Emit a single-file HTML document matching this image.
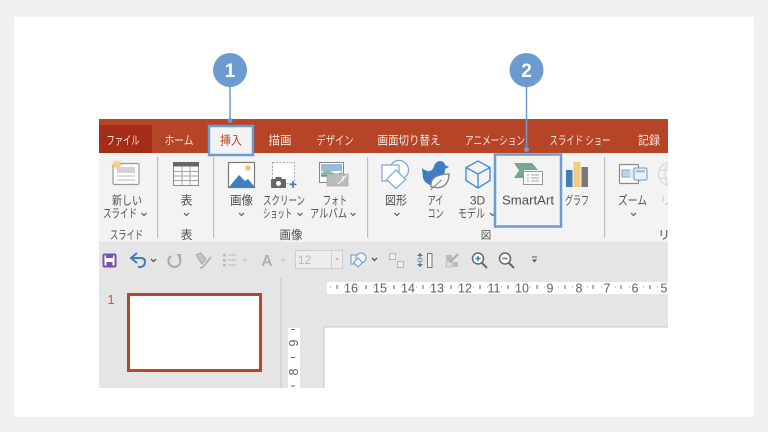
<!DOCTYPE html>
<html lang="ja"><head><meta charset="utf-8"><style>
html,body{margin:0;padding:0;width:768px;height:432px;overflow:hidden;background:#f0f0f0}
svg{display:block}
text{font-family:"Liberation Sans","Noto Sans CJK JP",sans-serif;font-size:12px;fill:#505050;text-anchor:middle}
.t{fill:#f8e8e3}
.r{font-size:12.5px;fill:#606060}
</style></head><body>
<svg width="768" height="432" viewBox="0 0 768 432" xmlns="http://www.w3.org/2000/svg">
<rect width="768" height="432" fill="#f0f0f0"/>
<rect x="14" y="17" width="740" height="400" fill="#fff"/>
<g style="filter:blur(.35px)">
<rect x="99" y="119" width="569" height="34" fill="#b64427"/>
<rect x="99" y="125" width="53" height="28" fill="#a52c17"/>
<rect x="99" y="153" width="569" height="89" fill="#f3f3f3"/>
<rect x="99" y="242" width="569" height="146" fill="#e5e5e5"/>
<!-- tabs -->
<text class="t" x="123" y="144.500" textLength="33" lengthAdjust="spacingAndGlyphs">ファイル</text>
<text class="t" x="179" y="144.500" textLength="29" lengthAdjust="spacingAndGlyphs">ホーム</text>
<rect x="209" y="126" width="44" height="29" fill="#f3f3f3" stroke="#6c9bd0" stroke-width="2.500"/>
<text x="231" y="144.500" style="fill:#b64427" textLength="22" lengthAdjust="spacingAndGlyphs">挿入</text>
<text class="t" x="280" y="144.500" textLength="23" lengthAdjust="spacingAndGlyphs">描画</text>
<text class="t" x="335" y="144.500" textLength="37" lengthAdjust="spacingAndGlyphs">デザイン</text>
<text class="t" x="409" y="144.500" textLength="63" lengthAdjust="spacingAndGlyphs">画面切り替え</text>
<text class="t" x="495" y="144.500" textLength="60" lengthAdjust="spacingAndGlyphs">アニメーション</text>
<text class="t" x="580" y="144.500" textLength="61" lengthAdjust="spacingAndGlyphs">スライド ショー</text>
<text class="t" x="649" y="144.500" textLength="22" lengthAdjust="spacingAndGlyphs">記録</text>
<!-- separators -->
<g fill="#bdbdbd"><rect x="157" y="157" width="1.200" height="81"/><rect x="213" y="157" width="1.200" height="81"/><rect x="367" y="157" width="1.200" height="81"/><rect x="604" y="157" width="1.200" height="81"/></g>
<!-- new slide icon -->
<rect x="113" y="163.500" width="26" height="21" rx="1.500" fill="#fbfbfb" stroke="#9a9a9a" stroke-width="1.200"/>
<rect x="117" y="167" width="18" height="6" fill="#d2d2d2"/>
<path d="M117 176h18M117 180h18" stroke="#bbb"/>
<circle cx="117" cy="164.500" r="3.500" fill="#f6cf8e"/>
<path d="M117 159v11M111.500 164.500h11M113 160.500l8 8M121 160.500l-8 8" stroke="#f6cf8e" stroke-width="1.100"/>
<!-- table icon -->
<rect x="173.500" y="162.500" width="25" height="23" fill="#fbfbfb" stroke="#8f8f8f"/>
<rect x="173" y="162" width="26" height="4.500" fill="#666"/>
<path d="M174 171.500h24M174 176h24M174 180.500h24M182 166v19M190 166v19" stroke="#a5a5a5" fill="none"/>
<!-- picture icon -->
<rect x="228.500" y="162.500" width="26" height="25" fill="#fff" stroke="#777" stroke-width="1.200"/>
<circle cx="248" cy="168" r="2.700" fill="#f3bf6a"/>
<path d="M229 187l10-12 6 6 3-2 6 7v1z" fill="#3f7fc0"/>
<!-- screenshot icon -->
<rect x="272.500" y="162.500" width="22" height="21" fill="#fff" stroke="#aaa" stroke-dasharray="2 1.500"/>
<rect x="271" y="179" width="15" height="9" rx="1" fill="#666"/>
<circle cx="278.500" cy="183.500" r="2.500" fill="#fff"/>
<path d="M275 179l1-2h5l1 2z" fill="#666"/>
<path d="M293 181v7M289.500 184.500h7" stroke="#3f7fc0" stroke-width="1.600"/>
<!-- photo album icon -->
<rect x="319.500" y="162.500" width="24" height="20" fill="#fff" stroke="#888"/>
<rect x="321" y="164" width="21" height="7" fill="#9bb9d8"/>
<path d="M321 173q6-5 11-1t10-1v5h-21z" fill="#8ebd9c"/>
<path d="M321 176h21" stroke="#3f7fc0" stroke-width="1.200"/>
<rect x="327" y="174" width="21" height="12" fill="#bcbcbc" stroke="#999" stroke-width=".6"/>
<path d="M338 184l9-9M343 176v5" stroke="#fff" fill="none"/>
<!-- shapes icon -->
<g fill="#fff" stroke="#7ca6d6" stroke-width="1.200">
<circle cx="399" cy="170" r="9.500"/>
<rect x="382" y="165" width="17" height="16"/>
<path d="M396 170l9.500 9.500-9.500 9-9.500-9z"/>
</g>
<!-- icons icon -->
<path d="M422 168q5 4 8 3 3-1 4-5 2-5 6-5 4 0 5 4l4 2-4 2q0 6-4 9l-8 8q-8-2-10-8z" fill="#3f7fc0"/>
<path d="M431 187q-1-8 6-11 6-2 12-2 0 7-4 11-5 4-11 2z" fill="#f6f6f6" stroke="#808080" stroke-width="1.300"/>
<path d="M430.500 190l11-10" stroke="#808080" fill="none"/>
<!-- 3D icon -->
<g fill="none" stroke="#3f8fd8" stroke-width="1.400"><path d="M478 161l12 6.500v13L478 188l-12-7.500v-13z"/><path d="M466 167.500l12 6.500 12-6.500M478 174v14"/></g>
<!-- smartart -->
<path d="M514 163h18l6 7h-14v8h-10l5-7.500z" fill="#75a78f"/>
<rect x="523.500" y="171.500" width="19" height="13" fill="#f8f8f8" stroke="#999"/>
<path d="M527 175h2M531 175h8M527 178h2M531 178h8M527 181h2M531 181h8" stroke="#aaa"/>
<!-- chart -->
<rect x="566" y="170" width="6.500" height="17" fill="#3f7cb8"/>
<rect x="573.500" y="162" width="7" height="25" fill="#f2cb7c"/>
<rect x="581.500" y="167" width="6.500" height="20" fill="#7a7a7a"/>
<!-- zoom -->
<rect x="619.500" y="164.500" width="19" height="19" rx="1" fill="#fbfbfb" stroke="#8a8a8a" stroke-width="1.200"/>
<rect x="622" y="170" width="9" height="7" fill="#bfd2e6" stroke="#6c9bd0" stroke-width=".8"/>
<path d="M630 170l5-2v11l-5-2z" fill="#dce8f3"/>
<rect x="634" y="168" width="13" height="12" rx="1.500" fill="#eaf0f7" stroke="#6c9bd0"/>
<rect x="636" y="170" width="9" height="2.500" fill="#bbb"/>
<!-- link globe (clipped) -->
<g fill="none" stroke="#d5d5d5"><circle cx="670" cy="174" r="11.500"/><ellipse cx="670" cy="174" rx="5" ry="11.500"/><path d="M659 170h22M659 178h22"/></g>
<!-- labels -->
<text x="127" y="204.500" textLength="30" lengthAdjust="spacingAndGlyphs">新しい</text>
<text x="120" y="217.500" textLength="34" lengthAdjust="spacingAndGlyphs">スライド</text>
<text x="126.500" y="239" textLength="33" lengthAdjust="spacingAndGlyphs">スライド</text>
<text x="186.500" y="204.500">表</text>
<text x="186.500" y="239">表</text>
<text x="241.500" y="204.500" textLength="23" lengthAdjust="spacingAndGlyphs">画像</text>
<text x="284" y="204.500" textLength="42" lengthAdjust="spacingAndGlyphs">スクリーン</text>
<text x="277.500" y="217.500" textLength="29" lengthAdjust="spacingAndGlyphs">ショット</text>
<text x="335" y="204.500" textLength="24" lengthAdjust="spacingAndGlyphs">フォト</text>
<text x="328.500" y="217.500" textLength="37" lengthAdjust="spacingAndGlyphs">アルバム</text>
<text x="291" y="239" textLength="23" lengthAdjust="spacingAndGlyphs">画像</text>
<text x="396" y="204.500" textLength="22" lengthAdjust="spacingAndGlyphs">図形</text>
<text x="435.500" y="204.500" textLength="16" lengthAdjust="spacingAndGlyphs">アイ</text>
<text x="435.500" y="217.500" textLength="16" lengthAdjust="spacingAndGlyphs">コン</text>
<text x="477.500" y="204.500">3D</text>
<text x="471.500" y="217.500" textLength="27" lengthAdjust="spacingAndGlyphs">モデル</text>
<text x="486" y="238.500" style="font-size:10.500px">図</text>
<text x="528" y="204.500" style="font-size:12.500px" textLength="52" lengthAdjust="spacingAndGlyphs">SmartArt</text>
<text x="577" y="204.500" textLength="24" lengthAdjust="spacingAndGlyphs">グラフ</text>
<text x="632.500" y="204.500" textLength="29" lengthAdjust="spacingAndGlyphs">ズーム</text>
<text x="664" y="239">リ</text>
<text x="666" y="204.500" style="fill:#ccc">リ</text>
<!-- chevrons -->
<g fill="none" stroke="#555" stroke-width="1.100">
<path d="M141.500 213l2.500 2.500 2.500-2.500M184 213l2.500 2.500 2.500-2.500M239 213l2.500 2.500 2.500-2.500M297.500 213l2.500 2.500 2.500-2.500M350.500 213l2.500 2.500 2.500-2.500M394.500 213l2.500 2.500 2.500-2.500M490 213l2.500 2.500 2.500-2.500M631 213l2.500 2.500 2.500-2.500"/>
</g>
<!-- highlight smartart box -->
<rect x="495" y="154.500" width="66" height="72" fill="none" stroke="#6c9bd0" stroke-width="2.500"/>
<!-- QAT -->
<rect x="103.500" y="254.500" width="12" height="12" rx="1" fill="#fff" stroke="#7c51a8" stroke-width="2"/>
<rect x="106" y="254" width="7" height="4" fill="#7c51a8"/>
<rect x="106.500" y="262" width="6" height="4" fill="#7c51a8"/>
<path d="M132 258h9q4 0 4 4t-4 5h-3" fill="none" stroke="#3f7cb8" stroke-width="2"/>
<path d="M137 253l-6 5 6 5" fill="none" stroke="#3f7cb8" stroke-width="2"/>
<path d="M151 259l2.500 2.500 2.500-2.500" fill="none" stroke="#444" stroke-width="1.200"/>
<path d="M171 256a6 6 0 1 0 8 1" fill="none" stroke="#aaa" stroke-width="2"/><path d="M176 254h5v5z" fill="#aaa"/>
<path d="M196 255l5-2 5 6-4 5z" fill="#c4c4c4" stroke="#aaa"/><path d="M211 257l-8 10-3 1" stroke="#aaa" stroke-width="1.500" fill="none"/>
<g fill="#bbb"><rect x="223" y="254" width="3" height="2.500"/><rect x="223" y="259" width="3" height="2.500"/><rect x="223" y="264" width="3" height="2.500"/></g>
<path d="M228 255h8M228 260h8M228 265h8" stroke="#bbb" stroke-width="1"/>
<path d="M243 259l2 2 2-2M281 259l2 2 2-2" fill="none" stroke="#bbb"/>
<text x="267" y="266" style="font-size:15.500px;font-weight:700;fill:#b0b0b0">A</text>
<rect x="295.500" y="250.500" width="47" height="18" fill="#ededed" stroke="#cfcfcf"/>
<path d="M331.500 251v17" stroke="#cfcfcf"/>
<text x="304.500" y="264" style="font-size:12px;fill:#b8b8b8;">12</text>
<path d="M335 258h4l-2 3z" fill="#bbb"/>
<!-- arrange -->
<g fill="#f3f3f3" stroke="#6c9bd0" stroke-width="1"><rect x="351" y="255" width="9" height="9"/><circle cx="361" cy="258" r="5"/><path d="M358 258l4.500 4.500-4.500 4.500-4.500-4.500z"/></g>
<path d="M372 258l2.500 2.500 2.500-2.500" fill="none" stroke="#444" stroke-width="1.200"/>
<rect x="389.500" y="253.500" width="6" height="6" fill="#eee" stroke="#b8b8b8"/><rect x="397.500" y="261.500" width="6" height="6" fill="#eee" stroke="#b8b8b8"/>
<rect x="427.500" y="253.500" width="4.500" height="14" fill="#f3f3f3" stroke="#777"/>
<path d="M420 253v14" stroke="#3f7cb8"/><path d="M417 256l3-3 3 3zM417 264l3 3 3-3z" fill="#3f7cb8"/>
<rect x="418" y="258.500" width="4" height="3" fill="#ddd" stroke="#777" stroke-width=".6"/>
<rect x="446" y="255" width="6" height="6" fill="#bbb"/><rect x="446" y="262" width="6" height="5" fill="#ddd" stroke="#bbb"/><rect x="453" y="262" width="5" height="5" fill="#bbb"/><path d="M450 262l8-8" stroke="#aaa" stroke-width="2"/>
<g fill="#fff" stroke="#666" stroke-width="1.500"><circle cx="478" cy="258.500" r="5.500"/><path d="M482 263l5 5" stroke-width="2"/></g>
<path d="M475.500 258.500h5M478 256v5" stroke="#3f7cb8" stroke-width="1.500"/>
<g fill="#fff" stroke="#666" stroke-width="1.500"><circle cx="505" cy="258.500" r="5.500"/><path d="M509 263l5 5" stroke-width="2"/></g>
<path d="M502.500 258.500h5" stroke="#3f7cb8" stroke-width="1.500"/>
<path d="M532 257h5" stroke="#555"/><path d="M532 259.500h5l-2.500 3z" fill="#555"/>
<!-- thumbnail pane -->
<text x="111" y="304" style="font-size:13px;fill:#c85a3c">1</text>
<rect x="128.500" y="294.500" width="132" height="76" fill="#fff" stroke="#b7472a" stroke-width="3"/>
<rect x="280.500" y="278" width="1" height="110" fill="#c8c8c8"/>
<!-- h ruler -->
<rect x="327" y="282" width="341" height="12" fill="#fff"/>
<text class="r" x="351" y="292.500">16</text><text class="r" x="380" y="292.500">15</text><text class="r" x="408" y="292.500">14</text><text class="r" x="437" y="292.500">13</text><text class="r" x="465" y="292.500">12</text><text class="r" x="494" y="292.500">11</text><text class="r" x="522" y="292.500">10</text><text class="r" x="550" y="292.500">9</text><text class="r" x="579" y="292.500">8</text><text class="r" x="607" y="292.500">7</text><text class="r" x="635" y="292.500">6</text><text class="r" x="664" y="292.500">5</text>
<path d="M337 285v4M366 285v4M394 285v4M423 285v4M451 285v4M480 285v4M508 285v4M537 285v4M565 285v4M593 285v4M621 285v4M650 285v4" stroke="#666"/>
<path d="M330 287h1M344 287h1M358 287h1M373 287h1M387 287h1M401 287h1M416 287h1M430 287h1M444 287h1M458 287h1M473 287h1M487 287h1M501 287h1M515 287h1M530 287h1M544 287h1M558 287h1M572 287h1M587 287h1M601 287h1M615 287h1M629 287h1M643 287h1M657 287h1" stroke="#999"/>
<!-- v ruler -->
<rect x="288" y="328" width="12" height="60" fill="#fff"/>
<text class="r" transform="translate(298,343) rotate(-90)" x="0" y="0">9</text>
<text class="r" transform="translate(298,372) rotate(-90)" x="0" y="0">8</text>
<path d="M291 329.500h4M291 357.500h4M291 386h4" stroke="#666"/>
<!-- slide -->
<rect x="324" y="327" width="344" height="61" fill="#fff"/>
<path d="M324 388v-61h344" fill="none" stroke="#c8c8c8"/>
<!-- clip right overflow -->
<rect x="668" y="119" width="30" height="275" fill="#fff"/>
<!-- callouts -->
<path d="M230 87v33" stroke="#6c9bd0" stroke-width="1.500"/><circle cx="230" cy="120.500" r="2.500" fill="#6c9bd0"/>
<path d="M526.500 87v62" stroke="#6c9bd0" stroke-width="1.500"/><circle cx="526.500" cy="149.500" r="2.500" fill="#6c9bd0"/>
<circle cx="230" cy="70" r="17" fill="#6c9bd0"/>
<circle cx="526.500" cy="70" r="17" fill="#6c9bd0"/>
<text x="230" y="77" style="font-size:19px;font-weight:700;fill:#fff">1</text>
<text x="526.500" y="77" style="font-size:19px;font-weight:700;fill:#fff">2</text>
</g>
</svg>
</body></html>
